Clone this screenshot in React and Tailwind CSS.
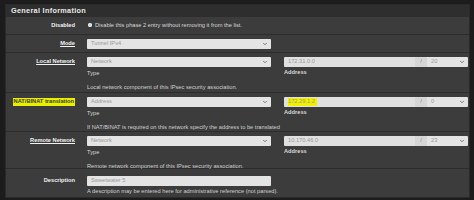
import { ChevronDown } from 'lucide-react'

function Select({ value, className = '' }) {
  return (
    <div className={`flex items-center justify-between h-[10px] bg-[#e4e4e4] rounded-[1px] pl-[4px] pr-[3px] ${className}`}>
      <span className="text-[5.7px] text-[#9a9a9a] leading-none">{value}</span>
      <ChevronDown className="w-[6px] h-[6px] text-[#555]" strokeWidth={3} />
    </div>
  )
}

function AddressGroup({ address, mask, highlight }) {
  return (
    <div className="flex flex-col">
      <div className="flex items-center h-[10px]">
        <div className="w-[131px] h-[10px] bg-[#e0e0e0] rounded-l-[1px] flex items-center pl-[4px]">
          <span className={`text-[5.7px] text-[#9a9a9a] leading-none ${highlight ? 'bg-[#f2f000] py-[1px] pr-[2px]' : ''}`}>{address}</span>
        </div>
        <div className="w-[12px] h-[10px] bg-[#d6d6d6] flex items-center justify-center text-[5.7px] text-[#888] leading-none">/</div>
        <Select value={mask} className="w-[41px] rounded-l-none" />
      </div>
      <span className="text-[5.7px] text-[#d8d8d8] font-semibold leading-none mt-[3px]">Address</span>
    </div>
  )
}

function Label({ children, underline, highlight }) {
  return (
    <div className="w-[69px] h-[10px] shrink-0 flex items-center justify-end leading-none">
      <span
        className={`text-[5.7px] font-bold leading-none ${underline ? 'underline' : ''} ${highlight ? 'bg-[#e8ef00] text-[#3a3a10] px-[1px] py-[1px]' : 'text-[#f2f2f2]'}`}
      >
        {children}
      </span>
    </div>
  )
}

function NetworkRow({ label, type, address, mask, help, highlight, underline, height, labelHighlight }) {
  return (
    <div className={`flex border-b border-[#2c2c2c] pt-[4px] ${height}`}>
      <Label underline={underline} highlight={labelHighlight}>{label}</Label>
      <div className="ml-[12px] flex flex-col">
        <div className="flex gap-[13px]">
          <div className="flex flex-col">
            <Select value={type} className="w-[184px]" />
            <span className="text-[5.7px] text-[#d8d8d8] leading-none mt-[4px]">Type</span>
          </div>
          <AddressGroup address={address} mask={mask} highlight={highlight} />
        </div>
        <p className="text-[5.7px] text-[#d0d0d0] leading-none mt-[8px] whitespace-nowrap">{help}</p>
      </div>
    </div>
  )
}

export default function App() {
  return (
    <div className="w-[474px] h-[200px] bg-[#1c1c1c] pt-[4px] pl-[5px] pr-[4px] overflow-hidden" style={{ fontFamily: '"Liberation Sans", Arial, sans-serif' }}>
      <div className="bg-[#3c3c3c] border border-[#2a2a2a] h-[194px]">
        {/* header */}
        <div className="h-[12px] bg-[#2e2e2e] flex items-center pl-[5px]">
          <span className="text-[7.3px] font-bold text-[#e8e8e8] tracking-[0.3px] leading-none">General Information</span>
        </div>

        {/* Disabled */}
        <div className="flex items-center h-[18px] border-b border-[#2c2c2c]">
          <Label>Disabled</Label>
          <div className="ml-[13px] flex items-center gap-[3px]">
            <div className="w-[4px] h-[4px] border border-[#ddd] rounded-[1px] flex items-center justify-center">
              <div className="w-[2px] h-[2px] bg-[#ddd]" />
            </div>
            <span className="text-[5.7px] text-[#d8d8d8] leading-none">Disable this phase 2 entry without removing it from the list.</span>
          </div>
        </div>

        {/* Mode */}
        <div className="flex items-center h-[18px] border-b border-[#2c2c2c]">
          <Label underline>Mode</Label>
          <div className="ml-[12px]">
            <Select value="Tunnel IPv4" className="w-[184px]" />
          </div>
        </div>

        <NetworkRow
          label="Local Network"
          underline
          type="Network"
          address="172.31.0.0"
          mask="20"
          help="Local network component of this IPsec security association."
          height="h-[40px]"
        />
        <NetworkRow
          label="NAT/BINAT translation"
          labelHighlight
          type="Address"
          address="172.29.1.2"
          mask="0"
          highlight
          help="If NAT/BINAT is required on this network specify the address to be translated"
          height="h-[39px]"
        />
        <NetworkRow
          label="Remote Network"
          underline
          type="Network"
          address="10.170.46.0"
          mask="23"
          help="Remote network component of this IPsec security association."
          height="h-[37px]"
        />

        {/* Description */}
        <div className="flex pt-[7px]">
          <Label>Description</Label>
          <div className="ml-[12px] flex flex-col">
            <div className="w-[184px] h-[10px] bg-[#e4e4e4] rounded-[1px] flex items-center pl-[4px]">
              <span className="text-[5.7px] text-[#9a9a9a] leading-none">Sweetwater 5</span>
            </div>
            <span className="text-[5.7px] text-[#d0d0d0] leading-none mt-[3px]">A description may be entered here for administrative reference (not parsed).</span>
          </div>
        </div>
      </div>
    </div>
  )
}
